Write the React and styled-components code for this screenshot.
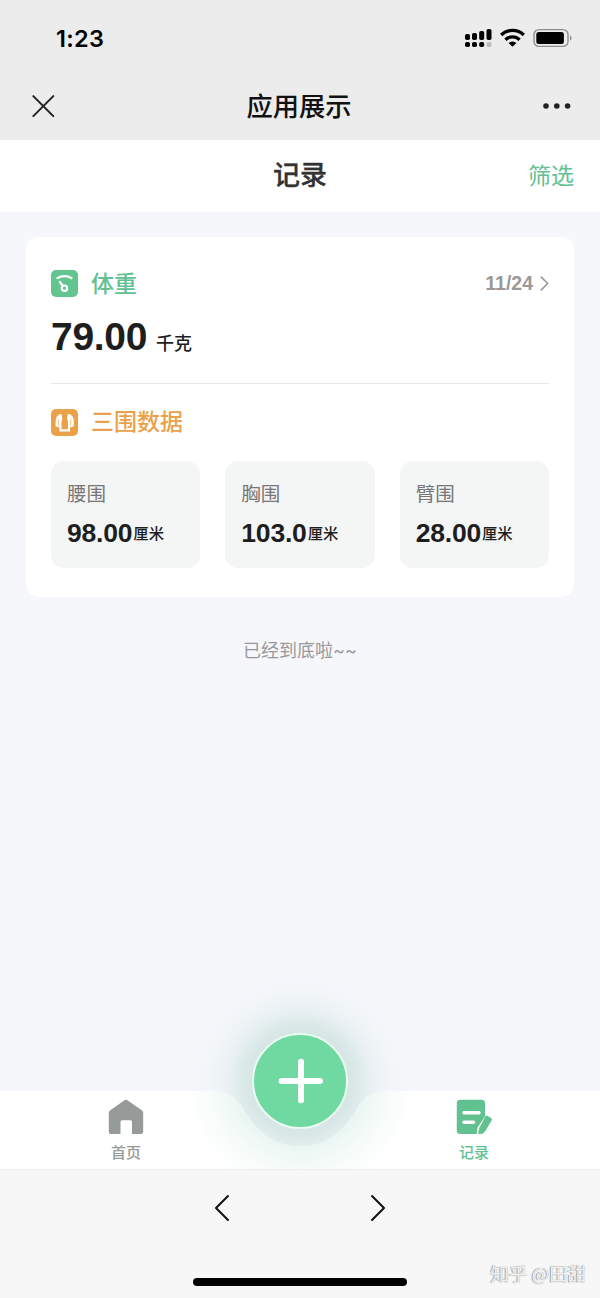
import React from 'react';
import styled, { createGlobalStyle } from 'styled-components';

const GlobalStyle = createGlobalStyle`
  * { box-sizing: border-box; }
  body {
    margin: 0;
    background: #f5f7fb;
    font-family: "Liberation Sans", "Noto Sans CJK SC", sans-serif;
  }
  svg { display: block; }
`;

const Screen = styled.div`
  width: 600px;
  height: 1298px;
  display: flex;
  flex-direction: column;
  overflow: hidden;
  background: #f5f7fb;
`;

const TopChrome = styled.header`
  height: 140px;
  flex: none;
  background: #ececec;
`;

const StatusBar = styled.div`
  height: 76px;
  padding: 0 28px 0 56px;
  display: flex;
  align-items: center;
  justify-content: space-between;
`;

const Clock = styled.span`
  padding-top: 1px;
  font: 600 23.5px/28px Inter, sans-serif;
  letter-spacing: 0.3px;
  color: #000;
`;

const StatusIcons = styled.div`
  display: flex;
  align-items: center;
  gap: 8px;
`;

const BrowserBar = styled.div`
  height: 60px;
  padding: 0 28px 0 30px;
  display: grid;
  grid-template-columns: 60px 1fr 60px;
  align-items: center;
  & > :last-child { justify-self: end; }
`;

const BrowserTitle = styled.div`
  font: 500 26.3px/36px "Noto Sans CJK SC", sans-serif;
  text-align: center;
  color: #111;
  margin-left: -4px;
  padding-bottom: 2px;
`;

const PageBar = styled.div`
  height: 72px;
  flex: none;
  padding: 0 26px 4px;
  display: grid;
  grid-template-columns: 80px 1fr 80px;
  align-items: center;
  background: #fff;
`;

const PageTitle = styled.h1`
  grid-column: 2;
  margin: 0;
  font: 500 27px/36px "Noto Sans CJK SC", sans-serif;
  -webkit-text-stroke: 0.3px #333;
  text-align: center;
  color: #333;
`;

const FilterButton = styled.button`
  border: 0;
  padding: 0;
  background: none;
  text-align: right;
  font: 400 23px/32px "Noto Sans CJK SC", sans-serif;
  color: #62c191;
`;

const Content = styled.main`
  flex: 1;
  padding: 25px 26px 0;
`;

const Card = styled.section`
  height: 360px;
  padding: 30px 25px 0;
  border-radius: 13px;
  background: #fff;
`;

const SectionHead = styled.div`
  height: 32px;
  display: flex;
  align-items: center;
  color: ${(p) => p.$color};
`;

const SectionTitle = styled.h2`
  margin: 0 0 0 13px;
  padding-bottom: ${(p) => p.$lift || 2}px;
  flex: 1;
  font: 500 23px/30px "Noto Sans CJK SC", sans-serif;
`;

const DateLink = styled.span`
  display: flex;
  align-items: center;
  gap: 7px;
  font-size: 19.5px;
  font-weight: 700;
  color: #999;
`;

const WeightValue = styled.div`
  height: 85px;
  padding-top: 15px;
  display: flex;
  align-items: baseline;
  gap: 9px;
  border-bottom: 1px solid #e8e9ea;
  margin-bottom: 22px;
  font-size: 39px;
  line-height: 46px;
  font-weight: 700;
  letter-spacing: -0.3px;
  color: #1e1e1e;
`;

const Unit = styled.span`
  font: 500 ${(p) => p.$size}px/1 "Noto Sans CJK SC", sans-serif;
  letter-spacing: 0;
`;

const Metrics = styled.div`
  margin-top: 23px;
  display: grid;
  grid-template-columns: repeat(3, 1fr);
  gap: 25px;
`;

const Metric = styled.div`
  height: 107px;
  padding: 18px 0 0 16px;
  border-radius: 13px;
  background: #f4f6f6;
`;

const MetricLabel = styled.div`
  font: 400 19.5px/28px "Noto Sans CJK SC", sans-serif;
  color: #777;
`;

const MetricValue = styled.div`
  margin-top: 10px;
  display: flex;
  align-items: center;
  gap: 1px;
  font-size: 26.5px;
  line-height: 32px;
  font-weight: 700;
  letter-spacing: -0.2px;
  color: #1e1e1e;
`;

const EndNote = styled.p`
  margin: 39px 0 0;
  text-align: center;
  font: 400 18px/26px "Noto Sans CJK SC", sans-serif;
  color: #999;
`;

const Tildes = styled.span`
  font-family: Inter, "Liberation Sans", sans-serif;
`;

const TabBar = styled.nav`
  position: relative;
  height: 78px;
  flex: none;
  display: grid;
  grid-template-columns: 252px 96px 252px;
`;

const Glow = styled.div`
  position: absolute;
  left: 190px;
  top: -120px;
  width: 220px;
  height: 220px;
  border-radius: 50%;
  background: radial-gradient(circle, #d6e6e4 0 48px, #dbe9e8 58px, #e6eff1 68px, #eef3f6 80px, #f2f6f9 92px, rgba(245, 247, 251, 0) 108px);
`;

const BarShape = styled.svg`
  position: absolute;
  inset: 0;
`;

const Tab = styled.div`
  position: relative;
  padding-top: 8px;
  display: flex;
  flex-direction: column;
  align-items: center;
  gap: 6px;
  font: 500 15px/22px "Noto Sans CJK SC", sans-serif;
  color: ${(p) => (p.$active ? '#62c191' : '#969a98')};
`;

const AddButton = styled.button`
  position: relative;
  width: 96px;
  height: 96px;
  margin-top: -58px;
  padding: 0;
  display: grid;
  place-items: center;
  border: 2px solid #e9fbf3;
  border-radius: 50%;
  background: #70d8a1;
`;

const Toolbar = styled.footer`
  position: relative;
  height: 129px;
  flex: none;
  border-top: 1px solid #eeeeee;
  background: #f7f7f7;
`;

const HistoryNav = styled.div`
  padding-top: 24px;
  display: flex;
  justify-content: center;
  gap: 140px;
`;

const HomeIndicator = styled.div`
  width: 214px;
  height: 8px;
  margin: 56px auto 0;
  border-radius: 4px;
  background: #000;
`;

const Watermark = styled.div`
  position: absolute;
  right: 14px;
  bottom: 12px;
  font: 400 18.5px/26px "Noto Sans CJK SC", sans-serif;
  color: #f0f0f0;
  text-shadow: -0.8px -0.5px 0.8px #8c8c8c, 0.3px 0.4px 1px #bbb;
`;

const SignalIcon = () => (
  <svg width="28" height="20" viewBox="0 0 28 20">
    <rect x="1" y="6" width="5" height="6" rx="1.8" />
    <rect x="8" y="5" width="5" height="7" rx="1.8" />
    <rect x="15.2" y="3" width="5" height="9" rx="1.8" />
    <rect x="22.5" y="1" width="5" height="11" rx="1.8" />
    <rect x="1" y="14" width="5" height="5" rx="1.8" />
    <rect x="8" y="14" width="5" height="5" rx="1.8" />
    <rect x="15.2" y="14" width="5" height="5" rx="1.8" />
    <rect x="22.5" y="14" width="5" height="5" rx="1.8" fill="#bdbdbd" />
  </svg>
);

const WifiIcon = () => (
  <svg width="25" height="20" viewBox="0 0 25 20" fill="none" stroke="#000" strokeWidth="3.3">
    <path d="M1.2 7a16.2 16.2 0 0 1 22.6 0" />
    <path d="M5.4 11.8a10.2 10.2 0 0 1 14.2 0" />
    <path d="M12.5 18.7l-3.9-3.8a5.8 5.8 0 0 1 7.8 0z" fill="#000" stroke="none" />
  </svg>
);

const BatteryIcon = () => (
  <svg width="39" height="20" viewBox="0 0 39 20">
    <rect x="1" y="1.6" width="34" height="16.8" rx="5" fill="none" stroke="#8e8e8e" strokeWidth="1.4" />
    <rect x="3.3" y="4" width="27.6" height="12" rx="2.5" />
    <path d="M37 7.4v5.2c2-.7 2-4.5 0-5.2z" fill="#8e8e8e" />
  </svg>
);

const CloseIcon = () => (
  <svg width="26" height="26" viewBox="0 0 26 26" stroke="#222" strokeWidth="2" strokeLinecap="round">
    <path d="M3.3 3.1l20 20M23.3 3.1l-20 20" />
  </svg>
);

const MoreIcon = () => (
  <svg width="30" height="8" viewBox="0 0 30 8" fill="#222">
    <circle cx="4" cy="4" r="2.8" />
    <circle cx="14.8" cy="4" r="2.8" />
    <circle cx="25.6" cy="4" r="2.8" />
  </svg>
);

const ScaleIcon = () => (
  <svg width="27" height="27" viewBox="0 0 27 27" fill="none" stroke="#fff" strokeLinecap="round">
    <rect width="27" height="27" rx="5" fill="#62c58f" stroke="none" />
    <path d="M6.4 8.2c3.8-2.8 10.4-2.8 14.2 0" strokeWidth="2.1" />
    <path d="M8.9 12l2.8 3.7" strokeWidth="2.3" />
    <circle cx="13.5" cy="18.2" r="2.7" strokeWidth="2.2" />
  </svg>
);

const ShirtIcon = () => (
  <svg width="27" height="27" viewBox="0 0 27 27" fill="none" stroke="#fff" strokeWidth="1.2" strokeLinejoin="round" strokeLinecap="round">
    <rect width="27" height="27" rx="5" fill="#eba149" stroke="none" />
    <path d="M9.4 11v10.4H18V11" strokeWidth="2.1" strokeLinejoin="miter" />
    <path d="M10 5.6C7 6.4 5.5 8.2 5.3 11.2L5.2 17l2.6.6L9.6 13l1.2-3.6z" fill="#fff" />
    <path d="M17.4 5.6c3 .8 4.5 2.6 4.7 5.6l.1 5.8-2.6.6L17.8 13l-1.2-3.6z" fill="#fff" />
    <path d="M7.7 11v5M19.7 11v5" stroke="#eba149" strokeWidth=".7" />
  </svg>
);

const HomeIcon = () => (
  <svg width="36" height="36" viewBox="0 0 36 36">
    <path d="M16.2 1.4Q18 .2 19.8 1.4L33.8 11.2Q35.2 12.2 35.2 14V32.8Q35.2 35 33 35H24V22.8Q24 21.3 22.5 21.3H14Q12.5 21.3 12.5 22.8V35H3Q.8 35 .8 32.8V14Q.8 12.2 2.2 11.2z" fill="#969a98" />
  </svg>
);

const NoteIcon = () => (
  <svg width="36" height="36" viewBox="0 0 36 36">
    <path d="M4.2.7H25.5Q29 .7 29 4.2V17.5L21.6 28.5 20.6 34.9H4.2Q.8 34.9 .8 31.4V4.2Q.8.7 4.2.7z" fill="#62c191" />
    <path d="M8 13.8h15M8 23.3h9.5" stroke="#fff" strokeWidth="3.4" strokeLinecap="round" />
    <path d="M31.2 17l3.6 2.1q1.4.8.6 2.2L29.2 32.1 26.8 34.5 22.6 34.9l.6-5.2L29.4 17.8q.7-1.4 1.8-.8z" fill="#62c191" stroke="#62c191" strokeWidth=".5" />
  </svg>
);

const PlusIcon = () => (
  <svg width="46" height="46" viewBox="0 0 46 46" stroke="#fff" strokeWidth="6" strokeLinecap="round">
    <path d="M24 3.8v38.5M4.6 23h38.5" />
  </svg>
);

const Chevron = ({ width, height, left, stroke, weight }) => (
  <svg width={width} height={height} viewBox="0 0 16 28" fill="none" stroke={stroke} strokeWidth={weight} strokeLinecap="round" strokeLinejoin="round">
    <path d={left ? 'M14 2L2 14l12 12' : 'M2 2l12 12L2 26'} />
  </svg>
);

const metrics = [
  { label: '腰围', value: '98.00' },
  { label: '胸围', value: '103.0' },
  { label: '臂围', value: '28.00' },
];

export default function App() {
  return (
    <Screen>
      <GlobalStyle />
      <TopChrome>
        <StatusBar>
          <Clock>1:23</Clock>
          <StatusIcons>
            <SignalIcon />
            <WifiIcon />
            <BatteryIcon />
          </StatusIcons>
        </StatusBar>
        <BrowserBar>
          <CloseIcon />
          <BrowserTitle>应用展示</BrowserTitle>
          <MoreIcon />
        </BrowserBar>
      </TopChrome>
      <PageBar>
        <PageTitle>记录</PageTitle>
        <FilterButton>筛选</FilterButton>
      </PageBar>
      <Content>
        <Card>
          <SectionHead $color="#62c191">
            <ScaleIcon />
            <SectionTitle>体重</SectionTitle>
            <DateLink>
              11/24
              <Chevron width={9} height={15} stroke="#999" weight={3} />
            </DateLink>
          </SectionHead>
          <WeightValue>
            79.00<Unit $size={18}>千克</Unit>
          </WeightValue>
          <SectionHead $color="#eba149">
            <ShirtIcon />
            <SectionTitle $lift={4}>三围数据</SectionTitle>
          </SectionHead>
          <Metrics>
            {metrics.map((m) => (
              <Metric key={m.label}>
                <MetricLabel>{m.label}</MetricLabel>
                <MetricValue>
                  {m.value}<Unit $size={15.3}>厘米</Unit>
                </MetricValue>
              </Metric>
            ))}
          </Metrics>
        </Card>
        <EndNote>已经到底啦<Tildes>~~</Tildes></EndNote>
      </Content>
      <TabBar>
        <Glow />
        <BarShape width="600" height="78" viewBox="0 0 600 78">
          <defs>
            <radialGradient id="barTint" gradientUnits="userSpaceOnUse" cx="300" cy="-10" r="116">
              <stop offset="0.5" stopColor="#e6f4f0" />
              <stop offset="0.62" stopColor="#eef8f5" />
              <stop offset="0.8" stopColor="#f8fcfb" />
              <stop offset="1" stopColor="#ffffff" />
            </radialGradient>
          </defs>
          <path d="M0 0H213C228 0 237 6 244 19C258 43 276 55 300 55C324 55 342 43 356 19C363 6 372 0 387 0H600V78H0z" fill="url(#barTint)" />
        </BarShape>
        <Tab>
          <HomeIcon />
          首页
        </Tab>
        <AddButton aria-label="添加">
          <PlusIcon />
        </AddButton>
        <Tab $active>
          <NoteIcon />
          记录
        </Tab>
      </TabBar>
      <Toolbar>
        <HistoryNav>
          <Chevron width={16} height={28} left stroke="#111" weight={2} />
          <Chevron width={16} height={28} stroke="#111" weight={2} />
        </HistoryNav>
        <HomeIndicator />
        <Watermark>知乎 @田甜</Watermark>
      </Toolbar>
    </Screen>
  );
}
